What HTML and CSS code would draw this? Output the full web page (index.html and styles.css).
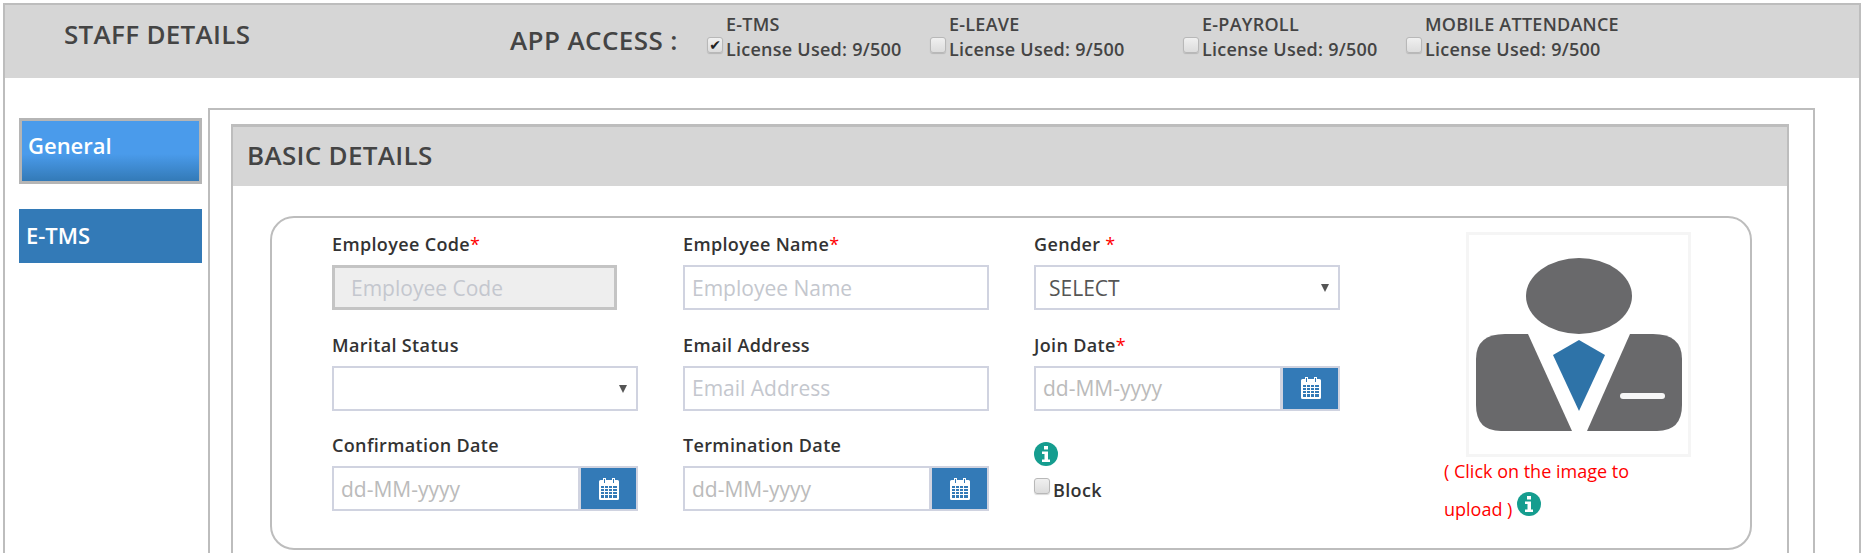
FILE: index.html
```html
<!DOCTYPE html>
<html lang="en">
<head>
<meta charset="utf-8">
<title>Staff Details</title>
<link rel="stylesheet" href="styles.css">
</head>
<body>
<svg class="defs" width="0" height="0" aria-hidden="true">
  <symbol id="cal" viewBox="0 0 20 22">
    <path fill="#fff" fill-rule="evenodd" d="M4 0h3v2h6V0h3v2h2.500A1.500 1.500 0 0 1 20 3.500V20.500A1.500 1.500 0 0 1 18.500 22H1.500A1.500 1.500 0 0 1 0 20.500V3.500A1.500 1.500 0 0 1 1.500 2H4zM2 8v2h3V8zm4 0v2h3V8zm4 0v2h3V8zm4 0v2h4V8zM2 11v2h3v-2zm4 0v2h3v-2zm4 0v2h3v-2zm4 0v2h4v-2zM2 14v2h3v-2zm4 0v2h3v-2zm4 0v2h3v-2zm4 0v2h4v-2zM2 17v3h3v-3zm4 0v3h3v-3zm4 0v3h3v-3zm4 0v3h4v-3z"/>
    <path fill="#337ab7" d="M5 1h1v4H5zM14 1h1v4h-1z"/>
  </symbol>
  <symbol id="info" viewBox="0 0 24 24">
    <circle cx="12" cy="12" r="12" fill="#159d8f"/>
    <path fill="#fff" d="M10 4h4v3.500h-4zM8 9.500h6v8h2V20H8v-2.500h2.500v-5.500H8z"/>
  </symbol>
</svg>
<div class="page">
  <header class="topbar">
    <h1 class="page-title">STAFF DETAILS</h1>
    <div class="access">
      <span class="access-label">APP ACCESS :</span>
      <label class="app app-tms">
        <span class="app-name">E-TMS</span>
        <span class="app-line"><input class="check" type="checkbox" checked>License Used: 9/500</span>
      </label>
      <label class="app app-leave">
        <span class="app-name">E-LEAVE</span>
        <span class="app-line"><input class="check" type="checkbox">License Used: 9/500</span>
      </label>
      <label class="app app-payroll">
        <span class="app-name">E-PAYROLL</span>
        <span class="app-line"><input class="check" type="checkbox">License Used: 9/500</span>
      </label>
      <label class="app">
        <span class="app-name">MOBILE ATTENDANCE</span>
        <span class="app-line"><input class="check" type="checkbox">License Used: 9/500</span>
      </label>
    </div>
  </header>

  <div class="main">
    <nav class="tabs">
      <a class="tab tab-active">General</a>
      <a class="tab">E-TMS</a>
    </nav>
    <section class="frame">
      <div class="panel">
        <h2 class="panel-title">BASIC DETAILS</h2>
        <div class="panel-body">
          <div class="form-box">
            <div class="form-grid">
              <div class="field">
                <label class="field-label">Employee Code<span class="req">*</span></label>
                <input class="input input-readonly" placeholder="Employee Code" readonly>
              </div>
              <div class="field">
                <label class="field-label">Employee Name<span class="req">*</span></label>
                <input class="input" placeholder="Employee Name">
              </div>
              <div class="field">
                <label class="field-label">Gender <span class="req">*</span></label>
                <div class="select-wrap">
                  <select class="input select"><option>SELECT</option></select>
                </div>
              </div>
              <div class="field">
                <label class="field-label">Marital Status</label>
                <div class="select-wrap">
                  <select class="input select"><option></option></select>
                </div>
              </div>
              <div class="field">
                <label class="field-label">Email Address</label>
                <input class="input" placeholder="Email Address">
              </div>
              <div class="field">
                <label class="field-label">Join Date<span class="req">*</span></label>
                <div class="date">
                  <input class="input date-input" placeholder="dd-MM-yyyy">
                  <button class="date-btn" type="button"><svg class="cal-icon"><use href="#cal"/></svg></button>
                </div>
              </div>
              <div class="field">
                <label class="field-label">Confirmation Date</label>
                <div class="date">
                  <input class="input date-input" placeholder="dd-MM-yyyy">
                  <button class="date-btn" type="button"><svg class="cal-icon"><use href="#cal"/></svg></button>
                </div>
              </div>
              <div class="field">
                <label class="field-label">Termination Date</label>
                <div class="date">
                  <input class="input date-input" placeholder="dd-MM-yyyy">
                  <button class="date-btn" type="button"><svg class="cal-icon"><use href="#cal"/></svg></button>
                </div>
              </div>
              <div class="field field-block">
                <svg class="info-icon"><use href="#info"/></svg>
                <label class="block-line"><input class="check" type="checkbox">Block</label>
              </div>
            </div>
            <div class="photo-col">
              <div class="photo">
                <svg class="avatar" viewBox="0 0 206 200" aria-hidden="true">
                  <ellipse cx="103" cy="41" rx="53" ry="38" fill="#69696b"/>
                  <path fill="#69696b" d="M29 79H52L96 176H25Q0 176 0 150V104Q0 79 29 79Z"/>
                  <path fill="#69696b" d="M177 79H154L111 176H181Q206 176 206 150V104Q206 79 177 79Z"/>
                  <path fill="#2e73a8" d="M103 85L129 100L103 156L77 100Z"/>
                  <rect x="144" y="138" width="45" height="6" rx="3" fill="#f7f7f7"/>
                </svg>
              </div>
              <p class="upload-note">( Click on the image to upload ) <svg class="info-icon info-inline"><use href="#info"/></svg></p>
            </div>
          </div>
        </div>
      </div>
    </section>
  </div>
</div>
</body>
</html>
```

FILE: styles.css
```css
html, body { margin: 0; height: 553px; overflow: hidden; background: #fff; }
body { font-family: "Open Sans", "Liberation Sans", sans-serif; color: #333; }
.defs { position: absolute; }
.page {
  margin: 3px 0 0 3px; width: 1858px; height: 550px; box-sizing: border-box;
  border: solid #bdbdbd; border-width: 2px 2px 0;
}
.topbar { display: flex; height: 73px; background: #d6d6d6; color: #444; }
.page-title { margin: 15px 0 0 59px; width: 446px; height: 28px; font-size: 26px; line-height: 28px; font-weight: 600; letter-spacing: .3px; color: #444; }
.access { display: flex; }
.access-label { margin-top: 20px; width: 198px; font-size: 26px; line-height: 30px; font-weight: 600; letter-spacing: .4px; color: #444; }
.app { display: flex; flex-direction: column; font-size: 18px; font-weight: 600; line-height: 20px; letter-spacing: .25px; color: #444; padding-top: 9px; }
.app-name { padding-left: 19px; height: 25px; display: block; }
.app-line { display: flex; align-items: flex-start; }
.app-tms { width: 223px; margin-left: -1px; }
.app-leave { width: 253px; }
.app-payroll { width: 223px; }
.check {
  appearance: none; margin: -2px 3px 0 0; width: 16px; height: 16px; flex: none; box-sizing: border-box;
  border: 1px solid #b8b8b8; border-radius: 3px; background: linear-gradient(#f0f0f0, #dcdcdc);
  box-shadow: 0 1px 1px rgba(0,0,0,.15); position: relative;
}
.check:checked::after {
  content: "✔"; position: absolute; inset: 0; font: 14px/14px "DejaVu Sans", sans-serif;
  text-align: center; color: #222;
}

.main { display: flex; align-items: flex-start; padding: 30px 44px 0 14px; height: 447px; }
.tabs { width: 183px; margin: 10px 6px 0 0; display: flex; flex-direction: column; gap: 25px; flex: none; }
.tab { display: block; height: 54px; line-height: 52px; padding-left: 7px; background: #337ab7; color: #fff; font-size: 22px; font-weight: 600; }
.tab-active {
  height: 66px; line-height: 48px; padding-left: 6px; box-sizing: border-box; border: 3px solid #b5b5b5;
  background: linear-gradient(#4a9beb 0 55%, #337ab7 100%);
}
.frame { flex: 1; height: 445px; border: solid #bdbdbd; border-width: 2px 2px 0; padding: 14px 24px 0 21px; }
.panel { border: solid #bdbdbd; border-width: 3px 2px 0; height: 431px; }
.panel-title { margin: 0; height: 59px; line-height: 56px; padding-left: 14px; background: #d6d6d6; font-size: 26px; font-weight: 600; letter-spacing: .3px; color: #444; }
.panel-body { padding: 30px 35px 0 37px; }

.form-box {
  display: flex; border: 2px solid #bdbdbd; border-radius: 24px; padding: 16px 0 36px 60px; height: 334px; box-sizing: border-box;
}
.form-grid { display: grid; grid-template-columns: repeat(3, 306px); column-gap: 45px; row-gap: 24.500px; width: 1008px; flex: none; align-content: start; }
.field { display: flex; flex-direction: column; min-width: 0; }
.field-label { height: 22px; line-height: 20px; margin-bottom: 9px; font-size: 18px; font-weight: 600; letter-spacing: .35px; color: #333; white-space: nowrap; }
.req { color: #f00; font-weight: 400; }
.input {
  width: 100%; height: 45px; box-sizing: border-box; border: 2px solid #d0d3e0; border-radius: 0; padding: 0 7px;
  font: 21px "Open Sans", sans-serif; color: #555; background: #fff; outline: none;
}
.input::placeholder { color: #c4c7ce; opacity: 1; }
.input-readonly { width: 285px; border: 3px solid #c4c4c4; background: #eee; padding-left: 16px; }
.select { appearance: none; padding-left: 13px; }
.select-wrap { position: relative; }
.select-wrap::after {
  content: ""; position: absolute; right: 11px; top: 19px;
  border: solid transparent; border-width: 8px 4px 0; border-top-color: #555;
}
.date { display: flex; }
.date-input { flex: 1; min-width: 0; border-right: 0; }
.date-input::placeholder { color: #bbb; }
.date-btn {
  width: 60px; height: 45px; flex: none; padding: 0; box-sizing: border-box; border: 2px solid #d0d3e0; border-left-width: 3px;
  background: #337ab7; display: flex; align-items: center; justify-content: center;
}
.cal-icon { width: 20px; height: 22px; display: block; }
.field-block { padding-top: 7px; }
.info-icon { width: 24px; height: 24px; display: block; }
.block-line { display: flex; align-items: flex-start; margin-top: 12px; font-size: 18px; font-weight: 600; letter-spacing: .35px; line-height: 24px; color: #333; }
.block-line .check { margin: 0 3px 0 0; }

.photo-col { margin: -2px 0 0 104px; width: 255px; flex: none; }
.photo {
  margin-left: 22px; width: 225px; height: 225px; box-sizing: border-box; border: 3px solid #f5f5f5;
  display: flex; justify-content: center; padding-top: 20px;
}
.avatar { width: 206px; height: 200px; display: block; }
.upload-note { margin: -5px 0 0; width: 235px; font-size: 18px; line-height: 38px; color: #f00; }
.info-inline { display: inline-block; vertical-align: 0; }
```
